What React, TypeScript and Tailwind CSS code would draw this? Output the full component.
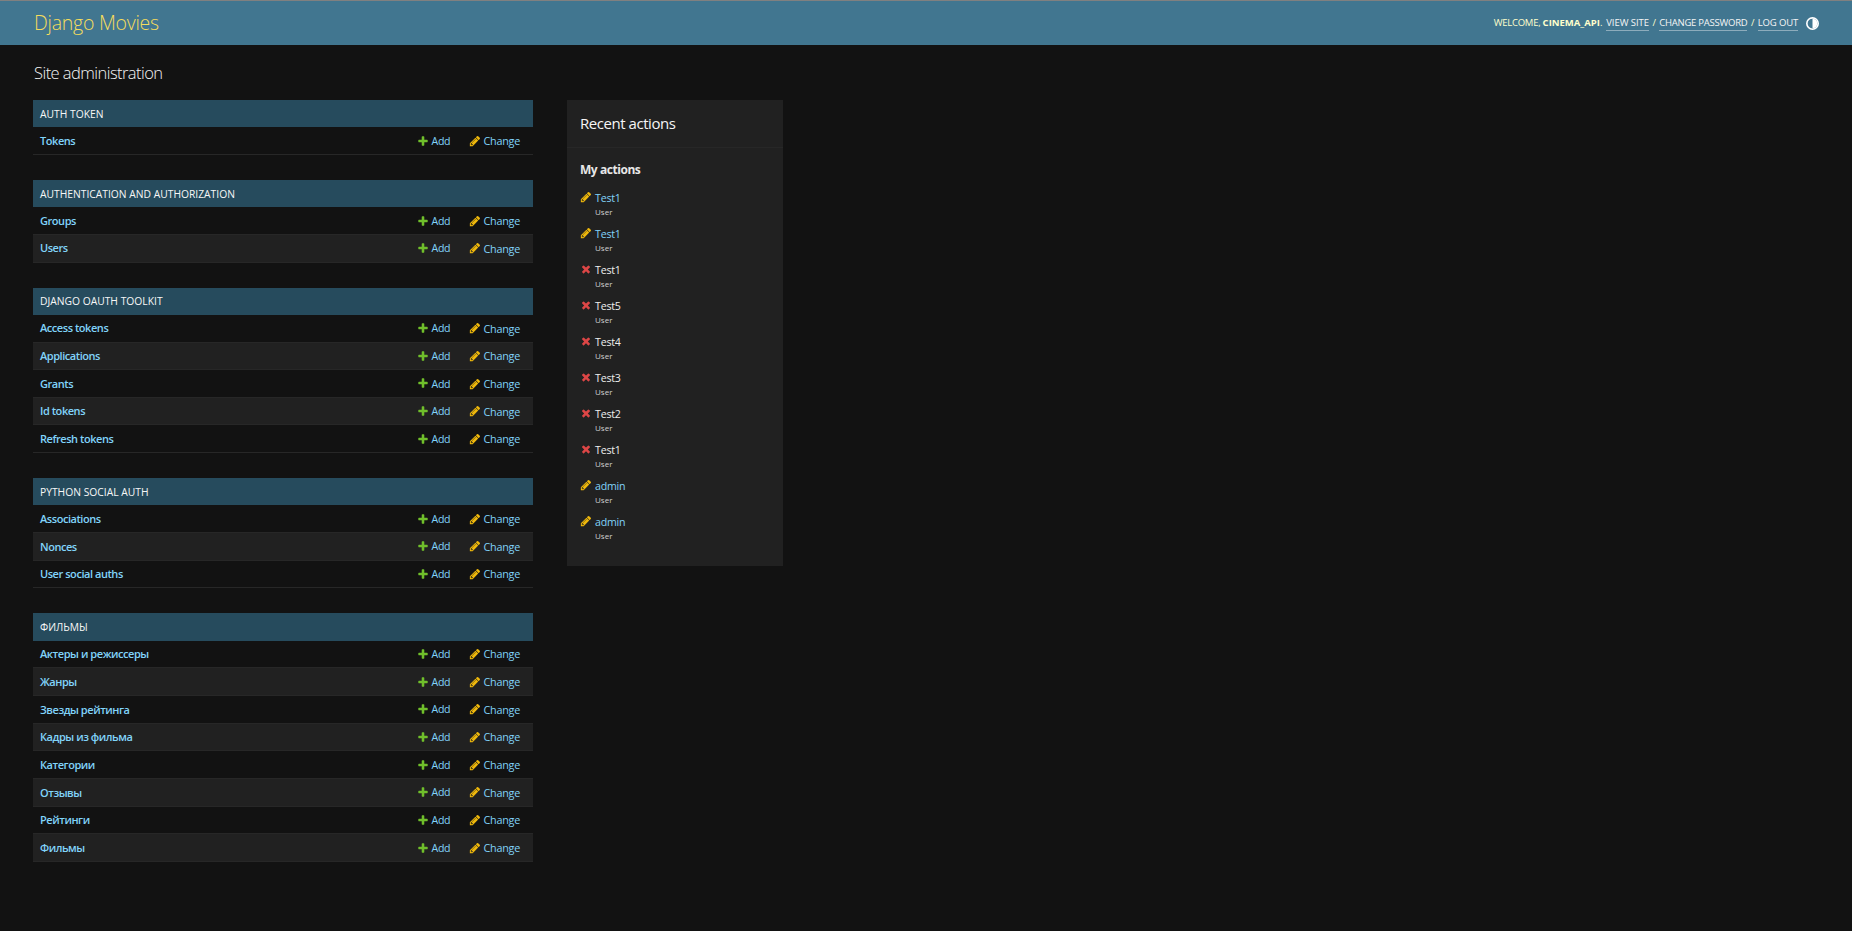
import React from "react";

const modules = [
  { title: "Auth Token", rows: ["Tokens"] },
  { title: "Authentication and Authorization", rows: ["Groups", "Users"] },
  { title: "Django OAuth Toolkit", rows: ["Access tokens", "Applications", "Grants", "Id tokens", "Refresh tokens"] },
  { title: "Python Social Auth", rows: ["Associations", "Nonces", "User social auths"] },
  { title: "Фильмы", rows: ["Актеры и режиссеры", "Жанры", "Звезды рейтинга", "Кадры из фильма", "Категории", "Отзывы", "Рейтинги", "Фильмы"] },
];

const actions = [
  { kind: "change", name: "Test1" },
  { kind: "change", name: "Test1" },
  { kind: "delete", name: "Test1" },
  { kind: "delete", name: "Test5" },
  { kind: "delete", name: "Test4" },
  { kind: "delete", name: "Test3" },
  { kind: "delete", name: "Test2" },
  { kind: "delete", name: "Test1" },
  { kind: "change", name: "admin" },
  { kind: "change", name: "admin" },
];

const AddIcon = () => (
  <svg viewBox="0 0 1792 1792" className="w-[12px] h-[12px] shrink-0">
    <path fill="#70bf2b" d="M1600 796v192q0 40-28 68t-68 28h-416v416q0 40-28 68t-68 28h-192q-40 0-68-28t-28-68v-416h-416q-40 0-68-28t-28-68v-192q0-40 28-68t68-28h416v-416q0-40 28-68t68-28h192q40 0 68 28t28 68v416h416q40 0 68 28t28 68z" />
  </svg>
);

const ChangeIcon = () => (
  <svg viewBox="0 0 1792 1792" className="w-[12px] h-[12px] shrink-0">
    <path fill="#efb80b" d="M491 1536l91-91-235-235-91 91v107h128v128h107zm523-928q0-22-22-22-10 0-17 7l-542 542q-7 7-7 17 0 22 22 22 10 0 17-7l542-542q7-7 7-17zm-54-192l416 416-832 832h-416v-416zm683 96q0 53-37 90l-166 166-416-416 166-165q36-38 90-38 53 0 91 38l235 234q37 39 37 91z" />
  </svg>
);

const DeleteIcon = () => (
  <svg viewBox="0 0 1792 1792" className="w-[12px] h-[12px] shrink-0">
    <path fill="#dd4646" d="M1490 1322q0 40-28 68l-136 136q-28 28-68 28t-68-28l-294-294-294 294q-28 28-68 28t-68-28l-136-136q-28-28-28-68t28-68l294-294-294-294q-28-28-28-68t28-68l136-136q28-28 68-28t68 28l294 294 294-294q28-28 68-28t68 28l136 136q28 28 28 68t-28 68l-294 294 294 294q28 28 28 68z" />
  </svg>
);

const Module = ({ title, rows }: { title: string; rows: string[] }) => (
  <div className="mb-[25px]">
    <div className="h-[27.3px] pl-[7px] pt-[2px] flex items-center bg-[#264b5d] text-[10.3px] uppercase text-[#f7f7f7]">
      {title}
    </div>
    {rows.map((row, i) => (
      <div
        key={row}
        className={`h-[27.67px] pl-[7px] pr-[13px] flex items-center border-b border-[#272727] text-[11px] ${i % 2 === 1 ? "bg-[#212121]" : ""}`}
      >
        <span className="font-semibold text-[#81d4fa] flex-1 tracking-[-0.45px] pt-[1px]">{row}</span>
        <span className="flex items-center gap-[2.5px] text-[#81d4fa] w-[52px] tracking-[-0.3px] text-[10.6px]">
          <AddIcon />
          <span className="pt-[2px]">Add</span>
        </span>
        <span className="flex items-center gap-[2.5px] text-[#81d4fa] tracking-[-0.25px] text-[10.8px]">
          <ChangeIcon />
          <span className="pt-[1px]">Change</span>
        </span>
      </div>
    ))}
  </div>
);

export default function App() {
  return (
    <div className="min-h-[931px] bg-[#121212] text-[#eeeeee] font-['Open_Sans',sans-serif]">
      <header className="h-[45px] bg-[#417690] border-t border-[#808080] flex items-center justify-between pl-[33px] pr-[33px]">
        <div className="pl-[1px] text-[19.5px] font-light text-[#f5dd5d] tracking-[-0.25px]">Django Movies</div>
        <div className="flex items-center text-[9.5px] uppercase text-[#ffffcc] tracking-[-0.15px] pt-[1px]">
          <span className="tracking-[-0.25px]">
            Welcome, <strong className="font-bold tracking-[0px]">cinema_api</strong>.{" "}
          </span>
          <span className="ml-[4px] text-[#f5f5f5] border-b border-[#ffffff66] tracking-[-0.05px]">View site</span>
          <span className="mx-[3.5px]">/</span>
          <span className="text-[#f5f5f5] border-b border-[#ffffff66] tracking-[-0.25px]">Change password</span>
          <span className="mx-[3.5px]">/</span>
          <span className="text-[#f5f5f5] border-b border-[#ffffff66]">Log out</span>
          <svg viewBox="0 0 24 24" className="w-[13px] h-[13px] ml-[8px]">
            <circle cx="12" cy="12" r="10.5" fill="none" stroke="#ffffff" strokeWidth="3" />
            <path d="M12 3a9 9 0 0 1 0 18z" fill="#ffffff" />
          </svg>
        </div>
      </header>

      <main className="pl-[33px] pt-[15px]">
        <h1 className="pl-[1px] h-[25px] leading-[25px] text-[16.5px] font-light text-[#f5f5f5] mb-[15px] tracking-[-0.55px]">Site administration</h1>
        <div className="flex items-start gap-[34px]">
          <div className="w-[500px]">
            {modules.map((m) => (
              <Module key={m.title} title={m.title} rows={m.rows} />
            ))}
          </div>
          <aside className="w-[216px] h-[466px] bg-[#212121]">
            <div className="h-[48px] px-[13px] flex items-center border-b border-[#272727] text-[15px] text-[#f5f5f5] tracking-[-0.45px]">
              Recent actions
            </div>
            <div className="px-[13px] pt-[13px]">
              <h3 className="text-[12px] font-bold text-[#e8e8e8] leading-[18px] mb-[9px] tracking-[-0.45px]">My actions</h3>
              {actions.map((a, i) => (
                <div key={i} className="h-[36px]">
                  <div className="flex items-center gap-[3px] h-[18px]">
                    {a.kind === "change" ? <ChangeIcon /> : <DeleteIcon />}
                    <span className={`text-[10.6px] pt-[3px] tracking-[-0.2px] ${a.kind === "change" ? "text-[#81d4fa]" : "text-[#eeeeee]"}`}>{a.name}</span>
                  </div>
                  <div className="pl-[15px] text-[8px] leading-[12px] text-[#d0d0d0]">User</div>
                </div>
              ))}
            </div>
          </aside>
        </div>
      </main>
    </div>
  );
}
